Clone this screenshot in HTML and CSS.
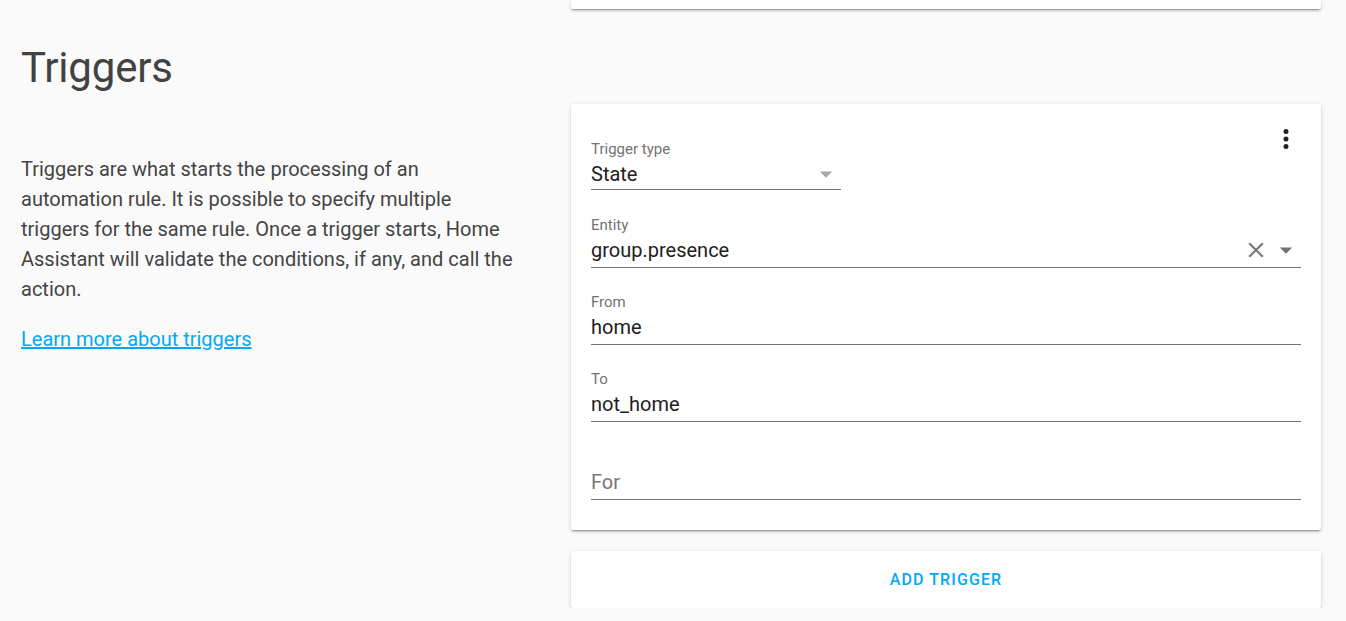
FILE: index.html
```html
<!DOCTYPE html>
<html lang="en">
<head>
<meta charset="utf-8">
<title>Triggers</title>
<link rel="stylesheet" href="styles.css">
</head>
<body>
<div class="section">
  <div class="intro">
    <h1 class="header">Triggers</h1>
    <p class="desc">Triggers are what starts the processing of an automation rule. It is possible to specify multiple triggers for the same rule. Once a trigger starts, Home Assistant will validate the conditions, if any, and call the action.</p>
    <p class="desc"><a class="link" href="#">Learn more about triggers</a></p>
  </div>
  <div class="panel">
    <div class="card card-prev"></div>
    <div class="card card-trigger">
      <button class="menu-btn" aria-label="menu">
        <svg viewBox="0 0 24 24" width="30" height="30"><path fill="#212121" d="M12,16A2,2 0 0,1 14,18A2,2 0 0,1 12,20A2,2 0 0,1 10,18A2,2 0 0,1 12,16M12,10A2,2 0 0,1 14,12A2,2 0 0,1 12,14A2,2 0 0,1 10,12A2,2 0 0,1 12,10M12,4A2,2 0 0,1 14,6A2,2 0 0,1 12,8A2,2 0 0,1 10,6A2,2 0 0,1 12,4Z"/></svg>
      </button>
      <div class="field field-narrow">
        <div class="label">Trigger type</div>
        <div class="value-row">
          <span class="value">State</span>
          <span class="icon"><svg viewBox="0 0 24 24" width="30" height="30"><path fill="#a8a8a8" d="M7,10L12,15L17,10H7Z"/></svg></span>
        </div>
      </div>
      <div class="field field-input gap-25">
        <div class="label">Entity</div>
        <div class="value-row">
          <span class="value">group.presence</span>
          <span class="icon"><svg viewBox="0 0 24 24" width="26" height="26"><path fill="#7a7a7a" d="M19,6.41L17.59,5L12,10.59L6.41,5L5,6.41L10.59,12L5,17.59L6.41,19L12,13.41L17.59,19L19,17.59L13.41,12L19,6.41Z"/></svg></span>
          <span class="icon"><svg viewBox="0 0 24 24" width="30" height="30"><path fill="#737373" d="M7,10L12,15L17,10H7Z"/></svg></span>
        </div>
      </div>
      <div class="field field-input gap-24">
        <div class="label">From</div>
        <div class="value-row"><span class="value">home</span></div>
      </div>
      <div class="field field-input gap-24">
        <div class="label">To</div>
        <div class="value-row"><span class="value">not_home</span></div>
      </div>
      <div class="field field-input gap-25">
        <div class="label"></div>
        <div class="value-row"><span class="value placeholder">For</span></div>
      </div>
    </div>
    <div class="card card-actions">
      <button class="text-btn">Add trigger</button>
    </div>
  </div>
</div>
</body>
</html>
```
FILE: styles.css
```css
html, body {
  margin: 0;
  padding: 0;
  background: #fafafa;
  font-family: Roboto, "Noto Sans", Arial, sans-serif;
  overflow: hidden;
}

.section {
  display: flex;
  padding: 0 25px 0 21px;
}

.intro {
  width: 500px;
  flex: 0 0 500px;
  margin-right: 50px;
  padding-top: 43px;
}

.header {
  margin: 0;
  font-size: 42px;
  line-height: 50px;
  font-weight: 400;
  color: #424242;
  letter-spacing: -0.2px;
}

.desc {
  margin: 20px 0;
  font-size: 20px;
  line-height: 30px;
  color: #444444;
}

.header + .desc {
  margin-top: 61px;
}

.link {
  color: #03a9f4;
  text-decoration: underline;
}

.panel {
  flex: 1 1 auto;
  min-width: 0;
  display: flex;
  flex-direction: column;
}

.card {
  background: #ffffff;
  border-radius: 2px;
  box-shadow: 0 2px 2px 0 rgba(0,0,0,.14), 0 1px 5px 0 rgba(0,0,0,.12), 0 3px 1px -2px rgba(0,0,0,.2);
}

.card-prev {
  height: 9px;
  border-top-left-radius: 0;
  border-top-right-radius: 0;
}

.card-trigger {
  position: relative;
  margin-top: 95px;
  padding: 35px 20px 30px;
}

.menu-btn {
  position: absolute;
  top: 20px;
  right: 20px;
  width: 30px;
  height: 30px;
  padding: 0;
  border: 0;
  background: none;
  display: flex;
}

.field {
  display: flex;
  flex-direction: column;
  border-bottom: 1px solid #747474;
}

.field-narrow {
  width: 250px;
}

.gap-25 { margin-top: 25px; }
.gap-24 { margin-top: 24px; }

.label {
  height: 20px;
  font-size: 15px;
  line-height: 20px;
  color: #737373;
}

.value-row {
  display: flex;
  align-items: center;
  height: 30px;
  box-sizing: content-box;
}

.field-input .value-row {
  padding-bottom: 2px;
}

.value {
  flex: 1 1 auto;
  font-size: 20px;
  line-height: 30px;
  color: #212121;
}

.placeholder {
  color: #757575;
}

.icon {
  flex: 0 0 30px;
  width: 30px;
  height: 30px;
  display: flex;
  align-items: center;
  justify-content: center;
}

.card-actions {
  margin-top: 21px;
  height: 57px;
  display: flex;
  align-items: center;
  justify-content: center;
}

.text-btn {
  border: 0;
  background: none;
  padding: 0;
  font-family: Roboto, "Noto Sans", Arial, sans-serif;
  font-size: 16px;
  font-weight: 500;
  letter-spacing: 1.1px;
  text-transform: uppercase;
  color: #03a9f4;
}
```
